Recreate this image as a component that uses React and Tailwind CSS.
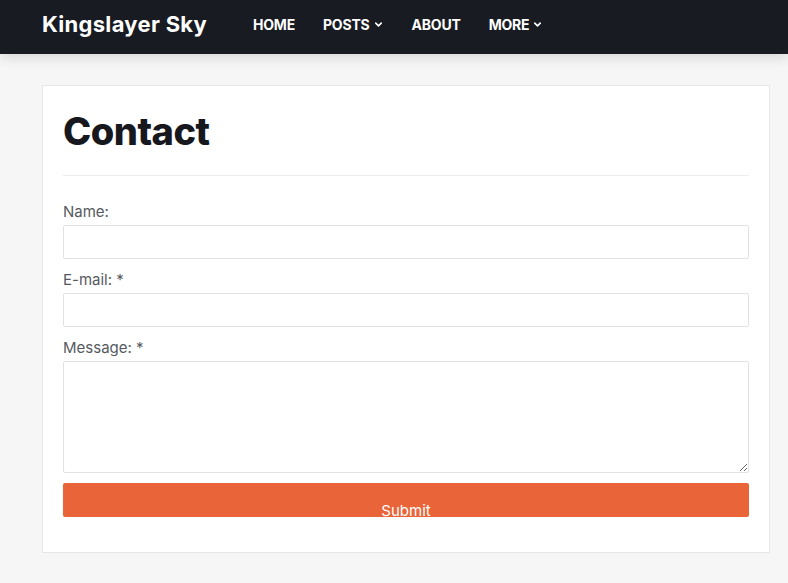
import { ChevronDown } from "lucide-react";

const font = { fontFamily: "Inter, 'Noto Sans', sans-serif" };

function NavItem({ label, caret }) {
  return (
    <a className="flex items-center gap-[3px] text-[14px] font-bold text-white tracking-[-0.2px]">
      {label}
      {caret && <ChevronDown size={11} strokeWidth={3.5} />}
    </a>
  );
}

function Field({ label, children }) {
  return (
    <div className="flex flex-col">
      <label className="text-[15px] leading-[22px] text-[#555a60] mb-[2px]">{label}</label>
      {children}
    </div>
  );
}

export default function App() {
  return (
    <div className="min-h-[583px] bg-[#f6f6f6]" style={font}>
      <header className="h-[54px] bg-[#181b22] flex items-center pl-[42px] pb-[5px] shadow-[0_4px_12px_rgba(0,0,0,0.12)]">
        <span className="text-[22px] font-bold text-white tracking-[0.3px] w-[211px]">
          Kingslayer Sky
        </span>
        <nav className="flex items-center gap-[28px]">
          <NavItem label="HOME" />
          <NavItem label="POSTS" caret />
          <NavItem label="ABOUT" />
          <NavItem label="MORE" caret />
        </nav>
      </header>

      <main className="pt-[31px] pl-[42px]">
        <div className="w-[728px] bg-white border border-[#e6e6e6] px-[20px] pt-[22px] pb-[35px]">
          <h1 className="text-[38px] leading-[46px] font-extrabold text-[#16181d] tracking-[-0.5px]">
            Contact
          </h1>
          <div className="mt-[21px] border-t border-[#ececec]" />

          <form className="mt-[25px] flex flex-col gap-[10px]">
            <Field label="Name:">
              <input className="h-[34px] border border-[#e2e2e2] rounded-[2px] outline-none" />
            </Field>
            <Field label="E-mail: *">
              <input className="h-[34px] border border-[#e2e2e2] rounded-[2px] outline-none" />
            </Field>
            <Field label="Message: *">
              <textarea className="h-[112px] border border-[#e2e2e2] rounded-[2px] outline-none resize-y" />
            </Field>
            <button
              type="button"
              className="h-[34px] bg-[#e96438] rounded-[2px] text-white text-[15px] leading-[16px] pt-[20px] text-center overflow-visible"
            >
              Submit
            </button>
          </form>
        </div>
      </main>
    </div>
  );
}
